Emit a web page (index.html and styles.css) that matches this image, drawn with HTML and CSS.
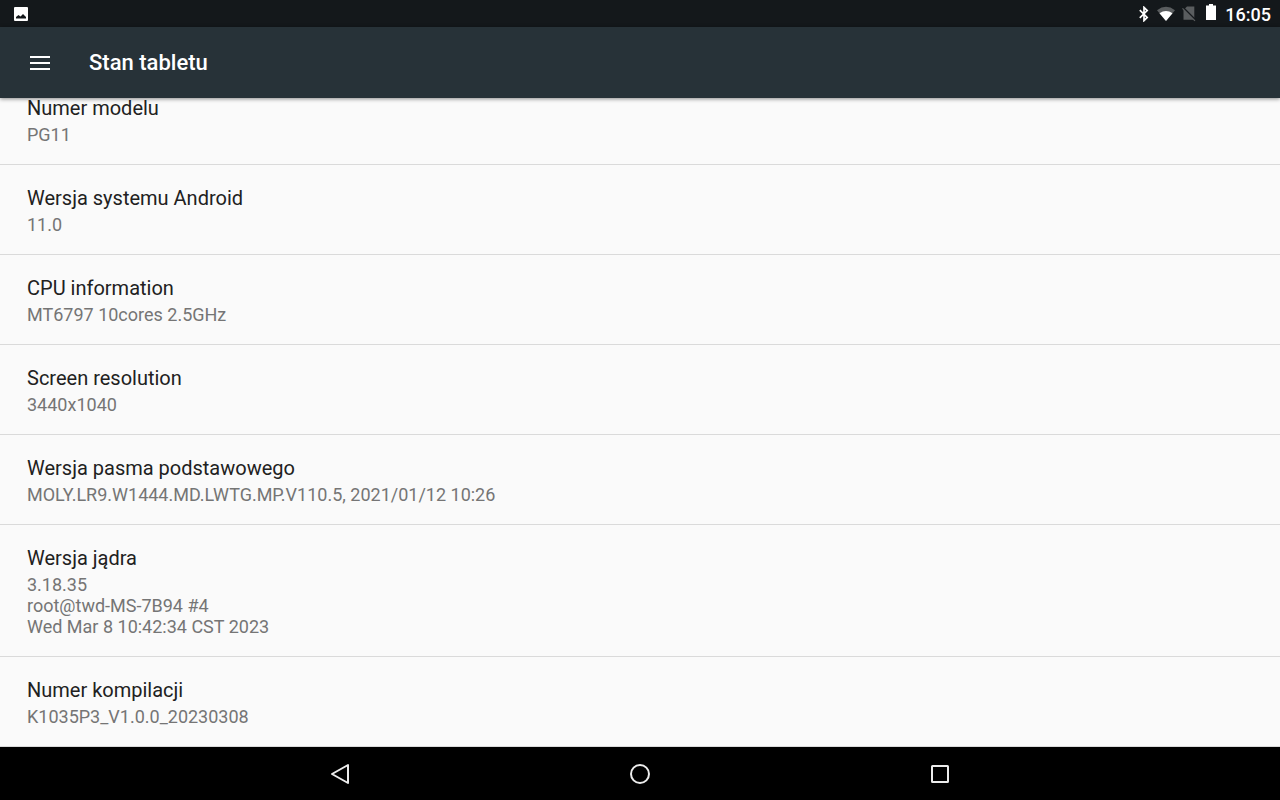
FILE: index.html
```html
<!DOCTYPE html>
<html lang="pl">
<head>
  <meta charset="UTF-8" />
  <meta name="viewport" content="width=device-width, initial-scale=1.0" />
  <title>Stan tabletu</title>
  <link rel="stylesheet" href="styles.css">
</head>
<body>

  <div class="status-bar">
    <svg class="icon-picture" width="14" height="14" viewBox="0 0 14 14" aria-hidden="true">
      <rect width="14" height="14" rx="1" fill="#fff"/>
      <path d="M2 11.5V10L4.5 8l2 1.5L9 7l3 3v1.5z" fill="#14181b"/>
    </svg>
    <div class="status-icons">
      <svg class="icon-bluetooth" width="10" height="16" viewBox="0 0 10 16" aria-hidden="true">
        <path d="M.8 4.2l7.4 7.2L5 14.6V1.4l3.2 3.2L.8 11.8" fill="none" stroke="#fff" stroke-width="1.7"/>
      </svg>
      <svg class="icon-wifi" width="20" height="16" viewBox="0 0 20 16" aria-hidden="true">
        <path d="M1 4.3Q10-2.6 19 4.3L10 15z" fill="#5a5d5f"/>
        <path d="M3.5 7.3Q10 2.6 16.5 7.3L10 15z" fill="#fff"/>
      </svg>
      <svg class="icon-sim" width="14" height="16" viewBox="0 0 14 16" aria-hidden="true">
        <path d="M5 .5h7.3v13.3H1.5V4z" fill="#5a5d5f"/>
        <path d="M1 1.4L14 14.4" stroke="#14181b" stroke-width="1.5"/>
        <path d="M.5 2.4L13 14.9" stroke="#5a5d5f" stroke-width="1.3"/>
      </svg>
      <svg class="icon-battery" width="10" height="20" viewBox="0 0 10 20" aria-hidden="true">
        <path d="M3 0h4v1.4h3V16H0V1.4h3z" fill="#fff"/>
      </svg>
      <span class="clock">16:05</span>
    </div>
  </div>

  <header class="app-bar">
    <button class="btn-menu" aria-label="Menu">
      <svg width="20" height="14" viewBox="0 0 20 14">
        <path d="M0 1h20M0 7h20M0 13h20" stroke="#fff" stroke-width="2"/>
      </svg>
    </button>
    <h1 class="app-title">Stan tabletu</h1>
  </header>

  <main class="content">
    <dl class="list">
      <div class="item">
        <dt>Numer modelu</dt>
        <dd>PG11</dd>
      </div>
      <div class="item">
        <dt>Wersja systemu Android</dt>
        <dd>11.0</dd>
      </div>
      <div class="item">
        <dt>CPU information</dt>
        <dd>MT6797 10cores 2.5GHz</dd>
      </div>
      <div class="item">
        <dt>Screen resolution</dt>
        <dd>3440x1040</dd>
      </div>
      <div class="item">
        <dt>Wersja pasma podstawowego</dt>
        <dd>MOLY.LR9.W1444.MD.LWTG.MP.V110.5, 2021/01/12 10:26</dd>
      </div>
      <div class="item">
        <dt>Wersja jądra</dt>
        <dd>3.18.35<br>root@twd-MS-7B94 #4<br>Wed Mar 8 10:42:34 CST 2023</dd>
      </div>
      <div class="item">
        <dt>Numer kompilacji</dt>
        <dd>K1035P3_V1.0.0_20230308</dd>
      </div>
    </dl>
  </main>

  <nav class="nav-bar">
    <button class="nav-btn" aria-label="Wstecz">
      <svg width="24" height="24" viewBox="0 0 24 24">
        <path d="M20 3v18L4 12z" fill="none" stroke="#ececec" stroke-width="2" stroke-linejoin="round"/>
      </svg>
    </button>
    <button class="nav-btn" aria-label="Ekran główny">
      <svg width="24" height="24" viewBox="0 0 24 24">
        <circle cx="12" cy="12" r="9" fill="none" stroke="#ececec" stroke-width="2"/>
      </svg>
    </button>
    <button class="nav-btn" aria-label="Ostatnie">
      <svg width="24" height="24" viewBox="0 0 24 24">
        <rect x="4" y="4" width="16" height="16" rx="0.5" fill="none" stroke="#ececec" stroke-width="2"/>
      </svg>
    </button>
  </nav>

</body>
</html>
```
FILE: styles.css
```css
*, *::before, *::after { box-sizing: border-box; margin: 0; padding: 0; }

body {
  height: 100vh;
  display: flex;
  flex-direction: column;
  background: #fafafa;
  color: #212121;
  font-family: Roboto, sans-serif;
}

button {
  background: none;
  border: none;
  cursor: pointer;
}

svg { display: block; }

/* Status bar */
.status-bar {
  flex: none;
  height: 27px;
  padding: 0 9px 0 14px;
  display: flex;
  align-items: center;
  justify-content: space-between;
  background: #14181b;
}

.status-icons {
  display: flex;
  align-items: center;
}

.icon-wifi { margin-left: 7px; }
.icon-sim { margin-left: 6px; }
.icon-battery { margin-left: 10px; }

.clock {
  margin-left: 9px;
  padding-top: 2px;
  color: #fff;
  font-size: 18px;
  font-weight: 500;
  line-height: 25px;
}

/* App bar */
.app-bar {
  flex: none;
  z-index: 1;
  height: 71px;
  padding: 0 20px;
  display: flex;
  align-items: center;
  background: #273238;
  box-shadow: 0 1px 4px rgba(0,0,0,0.45);
}

.btn-menu { padding: 10px; }

.app-title {
  margin-left: 29px;
  color: #fff;
  font-size: 22px;
  font-weight: 500;
  line-height: 71px;
}

/* Settings list, opens scrolled to its end */
.content {
  flex: 1;
  min-height: 0;
  display: flex;
  flex-direction: column-reverse;
  overflow-y: auto;
  scrollbar-width: none;
}

.item {
  padding: 21px 27px 19px;
  border-bottom: 1px solid #dadada;
}

.item dt {
  margin-bottom: 3px;
  font-size: 20px;
  line-height: 25px;
}

.item dd {
  color: #757575;
  font-size: 18px;
  line-height: 21px;
}

/* Navigation bar */
.nav-bar {
  flex: none;
  height: 53px;
  display: flex;
  align-items: center;
  justify-content: center;
  gap: 262px;
  background: #000;
}

.nav-btn { padding: 7px; }
```
